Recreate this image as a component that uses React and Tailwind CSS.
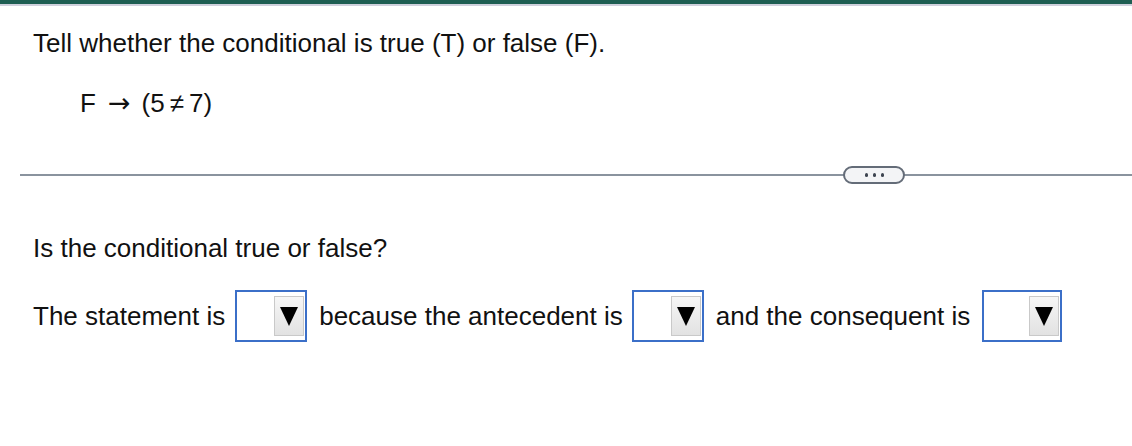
import React from "react";

const Dropdown = ({ width = "w-[72px]" }) => {
  return (
    <div className={`${width} h-[52px] border-2 border-[#3b6fc8] bg-white flex items-center justify-end pr-[1px]`}>
      <div className="w-[30px] h-[40px] border border-[#c9c9c9] bg-gradient-to-b from-[#f6f6f6] to-[#e2e2e2] flex items-center justify-center">
        <svg width="18" height="19" viewBox="0 0 18 19">
          <polygon points="0,0 18,0 9,19" fill="#000" />
        </svg>
      </div>
    </div>
  );
};

const App = () => {
  return (
    <div className="w-[1132px] h-[446px] bg-white font-['Liberation_Sans',Arial,sans-serif] text-[#111] overflow-hidden">
      <div className="h-[4px] bg-[#1e5e52]" />
      <div className="h-[2px] bg-[#cfd0dc]" />

      <div className="pl-[33px] pt-[22px]">
        <p className="text-[26px] leading-[30px]">
          Tell whether the conditional is true (T) or false (F).
        </p>
        <p className="text-[26px] leading-[30px] mt-[30px] pl-[47px] flex items-center">
          <span>F</span>
          <span className="font-['DejaVu_Sans',sans-serif] text-[27px] ml-[12px] mr-[11px]">&rarr;</span>
          <span>(5</span>
          <span className="mx-[5px]">&ne;</span>
          <span>7)</span>
        </p>
      </div>

      <div className="relative mt-[47px] ml-[20px] h-[20px] flex items-center">
        <div className="flex-1 h-[2px] bg-[#8a939e]" />
        <div className="absolute left-[823px] top-[1px] w-[62px] h-[18px] rounded-full border-2 border-[#646c78] bg-[#f3f4f6] flex items-center justify-center gap-[5px]">
          <span className="w-[3px] h-[4px] rounded-full bg-[#3d4450]" />
          <span className="w-[3px] h-[4px] rounded-full bg-[#3d4450]" />
          <span className="w-[3px] h-[4px] rounded-full bg-[#3d4450]" />
        </div>
      </div>

      <div className="pl-[33px]">
        <p className="text-[26px] leading-[30px] mt-[48px]">
          Is the conditional true or false?
        </p>
        <div className="flex items-center mt-[27px] text-[26px] leading-[30px]">
          <span>The statement is</span>
          <div className="ml-[10px] mr-[12px]">
            <Dropdown />
          </div>
          <span>because the antecedent is</span>
          <div className="ml-[9px] mr-[12px]">
            <Dropdown />
          </div>
          <span>and the consequent is</span>
          <div className="ml-[12px]">
            <Dropdown width="w-[80px]" />
          </div>
        </div>
      </div>
    </div>
  );
};

export default App;
